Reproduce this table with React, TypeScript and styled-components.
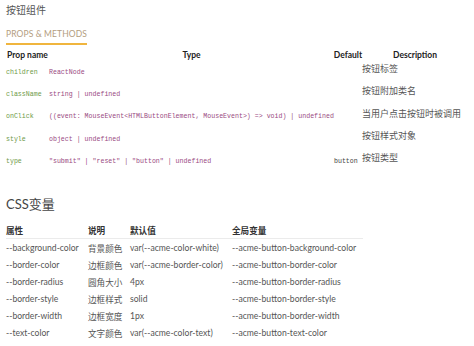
import React from "react";
import styled, { createGlobalStyle } from "styled-components";

const GlobalStyle = createGlobalStyle`
  html, body { margin: 0; padding: 0; background: #fff; }
  body { font-family: Lato, "Noto Sans CJK SC", sans-serif; }
`;

const Page = styled.div`
  padding: 4px 6px 0 6px;
  font-family: Lato, "Noto Sans CJK SC", sans-serif;
`;

const Title = styled.div`
  font-size: 10px;
  line-height: 12px;
  color: #555;
  font-family: "Noto Sans CJK SC", sans-serif;
`;

const Tabs = styled.div`
  margin-top: 12px;
  display: flex;
`;

const Tab = styled.div`
  font-size: 8.5px;
  line-height: 12px;
  color: #b39d80;
  padding-bottom: 3px;
  border-bottom: 2px solid #f0b53e;
  letter-spacing: 0.1px;
`;

const PropsGrid = styled.div`
  margin-top: 3px;
  display: grid;
  grid-template-columns: 43px 285px 28px 1fr;
`;

const PRow = styled.div`
  display: contents;
`;

const HeadCell = styled.div`
  height: 14px;
  display: flex;
  align-items: center;
  justify-content: center;
  font-size: 8.5px;
  font-weight: 700;
  color: #222;
  white-space: nowrap;
`;

const Cell = styled.div`
  height: 22.3px;
  display: flex;
  align-items: center;
  white-space: nowrap;
`;

const Code = styled.span<{ $kind: "name" | "type" | "plain" }>`
  font-family: "Liberation Mono", monospace;
  font-size: 6.6px;
  line-height: 1;
  color: ${(p) => (p.$kind === "name" ? "#6e9a48" : p.$kind === "type" ? "#9a4a82" : "#444")};
`;

const Desc = styled.span`
  font-family: "Noto Sans CJK SC", sans-serif;
  font-size: 9px;
  line-height: 12px;
  color: #555;
  padding-bottom: 8px;
`;

const SectionTitle = styled.div`
  margin-top: 22px;
  font-size: 13px;
  line-height: 18px;
  color: #444;
  font-family: Lato, "Noto Sans CJK SC", sans-serif;
`;

const VarTable = styled.div`
  margin-top: 9px;
  width: 357px;
`;

const VarRow = styled.div<{ $head?: boolean }>`
  display: grid;
  grid-template-columns: 82px 42px 102px 131px;
  height: ${(p) => (p.$head ? "16px" : "17px")};
  align-items: center;
  border-bottom: ${(p) => (p.$head ? "1px solid #ebebeb" : "none")};
  font-size: 8.6px;
  font-weight: ${(p) => (p.$head ? 700 : 400)};
  color: ${(p) => (p.$head ? "#333" : "#555")};
  font-family: Lato, "Noto Sans CJK SC", sans-serif;
  white-space: nowrap;
`;

const VarCell = styled.div`
  overflow: visible;
`;

const props = [
  { name: "children", type: "ReactNode", def: "", desc: "按钮标签" },
  { name: "className", type: "string | undefined", def: "", desc: "按钮附加类名" },
  {
    name: "onClick",
    type: "((event: MouseEvent<HTMLButtonElement, MouseEvent>) => void) | undefined",
    def: "",
    desc: "当用户点击按钮时被调用",
  },
  { name: "style", type: "object | undefined", def: "", desc: "按钮样式对象" },
  { name: "type", type: '"submit" | "reset" | "button" | undefined', def: "button", desc: "按钮类型" },
];

const vars = [
  ["--background-color", "背景颜色", "var(--acme-color-white)", "--acme-button-background-color"],
  ["--border-color", "边框颜色", "var(--acme-border-color)", "--acme-button-border-color"],
  ["--border-radius", "圆角大小", "4px", "--acme-button-border-radius"],
  ["--border-style", "边框样式", "solid", "--acme-button-border-style"],
  ["--border-width", "边框宽度", "1px", "--acme-button-border-width"],
  ["--text-color", "文字颜色", "var(--acme-color-text)", "--acme-button-text-color"],
];

export default function App() {
  return (
    <Page>
      <GlobalStyle />
      <Title>按钮组件</Title>
      <Tabs>
        <Tab>PROPS &amp; METHODS</Tab>
      </Tabs>
      <PropsGrid>
        <PRow>
          <HeadCell>Prop name</HeadCell>
          <HeadCell>Type</HeadCell>
          <HeadCell>Default</HeadCell>
          <HeadCell>Description</HeadCell>
        </PRow>
        {props.map((p) => (
          <PRow key={p.name}>
            <Cell>
              <Code $kind="name">{p.name}</Code>
            </Cell>
            <Cell>
              <Code $kind="type">{p.type}</Code>
            </Cell>
            <Cell>
              <Code $kind="plain">{p.def}</Code>
            </Cell>
            <Cell>
              <Desc>{p.desc}</Desc>
            </Cell>
          </PRow>
        ))}
      </PropsGrid>
      <SectionTitle>CSS变量</SectionTitle>
      <VarTable>
        <VarRow $head>
          <VarCell>属性</VarCell>
          <VarCell>说明</VarCell>
          <VarCell>默认值</VarCell>
          <VarCell>全局变量</VarCell>
        </VarRow>
        {vars.map((v) => (
          <VarRow key={v[0]}>
            {v.map((c, i) => (
              <VarCell key={i}>{c}</VarCell>
            ))}
          </VarRow>
        ))}
      </VarTable>
    </Page>
  );
}
